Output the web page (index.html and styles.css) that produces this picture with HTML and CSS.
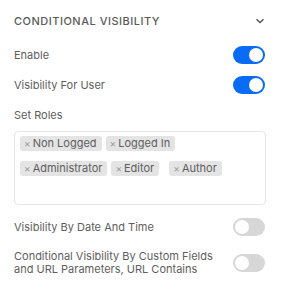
FILE: index.html
```html
<!DOCTYPE html>
<html>
<head>
<meta charset="utf-8">
<link rel="stylesheet" href="styles.css">
</head>
<body>
<div class="panel">
  <div class="header">
    <span class="title">Conditional Visibility</span>
    <svg class="chevron" width="10" height="6" viewBox="0 0 10 6"><path d="M1.5 1.2 L5 4.6 L8.5 1.2" fill="none" stroke="#555" stroke-width="1.4"/></svg>
  </div>
  <div class="row">
    <span class="label">Enable</span>
    <span class="toggle on"><span class="knob"></span></span>
  </div>
  <div class="row">
    <span class="label">Visibility For User</span>
    <span class="toggle on"><span class="knob"></span></span>
  </div>
  <div class="row">
    <span class="label">Set Roles</span>
  </div>
  <div class="roles">
    <span class="tag"><span class="x">×</span>Non Logged</span>
    <span class="tag"><span class="x">×</span>Logged In</span>
    <span class="tag"><span class="x">×</span>Administrator</span>
    <span class="tag"><span class="x">×</span>Editor</span>
    <span class="tag wide"><span class="x">×</span>Author</span>
  </div>
  <div class="row date">
    <span class="label">Visibility By Date And Time</span>
    <span class="toggle"><span class="knob"></span></span>
  </div>
  <div class="row multi">
    <span class="label">Conditional Visibility By Custom Fields and URL Parameters, URL Contains</span>
    <span class="toggle"><span class="knob"></span></span>
  </div>
</div>
</body>
</html>
```
FILE: styles.css
```css
html, body {
  margin: 0;
  padding: 0;
  background: #fff;
}
body {
  font-family: Inter, "Noto Sans", sans-serif;
  color: #5e5e5e;
  font-size: 11px;
}
.panel {
  padding: 0 16px 0 14px;
}
.header {
  height: 40px;
  display: flex;
  align-items: center;
  justify-content: space-between;
  padding-top: 1px;
  box-sizing: border-box;
}
.title {
  text-transform: uppercase;
  font-size: 11px;
  font-weight: 500;
  letter-spacing: 0.5px;
  color: #5a5a5a;
}
.chevron {
  display: block;
}
.row {
  height: 30px;
  display: flex;
  align-items: center;
  justify-content: space-between;
}
.label {
  line-height: 13px;
}
.toggle {
  flex: none;
  width: 32px;
  height: 18px;
  border-radius: 9px;
  background: #d7d7d7;
  position: relative;
  display: block;
}
.toggle.on {
  background: #0a6cf5;
}
.knob {
  position: absolute;
  top: 2px;
  left: 2px;
  width: 14px;
  height: 14px;
  border-radius: 50%;
  background: #fff;
}
.toggle.on .knob {
  left: 16px;
}
.roles {
  margin-top: 1px;
  height: 74px;
  box-sizing: border-box;
  border: 1px solid #e6e6e6;
  border-radius: 4px;
  padding: 4px 5px;
  display: flex;
  flex-wrap: wrap;
  align-content: flex-start;
  column-gap: 4px;
  row-gap: 10px;
  width: 252px;
}
.tag {
  height: 15px;
  line-height: 15px;
  background: #e4e4e4;
  border-radius: 3px;
  padding: 0 5px 0 4px;
  font-size: 11px;
  color: #5e5e5e;
  display: flex;
  align-items: center;
}
.tag.wide {
  margin-left: 6px;
}
.x {
  color: #999;
  font-size: 10px;
  margin-right: 2px;
}
.row.date {
  margin-top: 7px;
}
.row.multi {
  margin-top: 7px;
  height: 27px;
}
.row.multi .label {
  width: 215px;
}
```
